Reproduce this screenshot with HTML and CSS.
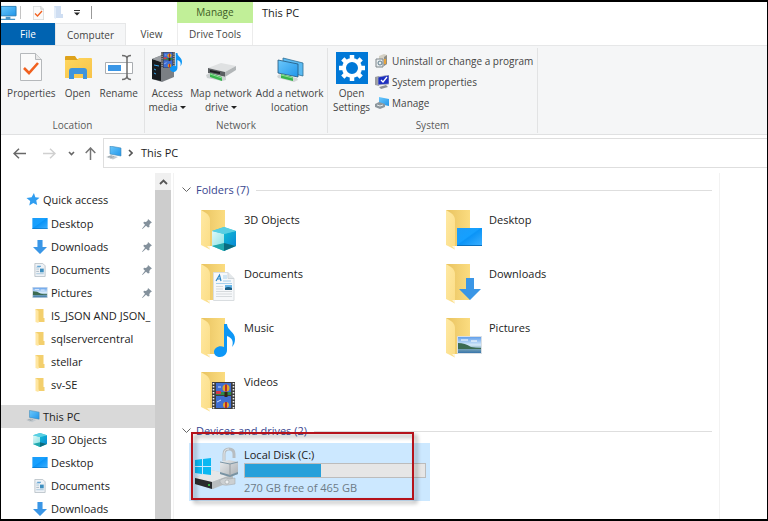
FILE: index.html
```html
<!DOCTYPE html>
<html lang="en">
<head>
<meta charset="utf-8">
<meta name="viewport" content="width=device-width, initial-scale=1">
<title>This PC</title>
<link rel="stylesheet" href="styles.css">
</head>
<body>
<svg class="defs" aria-hidden="true">
  <defs>
    <linearGradient id="g-fold" x1="0" y1="0" x2="1" y2="0"><stop offset="0" stop-color="#e8c25e"/><stop offset=".5" stop-color="#f2d071"/><stop offset="1" stop-color="#fbdc80"/></linearGradient>
    <linearGradient id="g-flap" x1="0" y1="0" x2="1" y2="1"><stop offset="0" stop-color="#ffe9a3"/><stop offset="1" stop-color="#fbdd86"/></linearGradient>
    <linearGradient id="g-blue" x1="0" y1="0" x2="1" y2="1"><stop offset="0" stop-color="#1c9cf8"/><stop offset=".45" stop-color="#15a0ff"/><stop offset=".5" stop-color="#0b94f7"/><stop offset="1" stop-color="#3db0ff"/></linearGradient>
    <linearGradient id="g-screen" x1="0" y1="0" x2="1" y2="1"><stop offset="0" stop-color="#6cc8fb"/><stop offset="1" stop-color="#2196ea"/></linearGradient>
    <linearGradient id="g-sky" x1="0" y1="0" x2="0" y2="1"><stop offset="0" stop-color="#5b9bea"/><stop offset=".5" stop-color="#d5e9fa"/><stop offset=".7" stop-color="#7fa8b8"/><stop offset="1" stop-color="#2f6ea8"/></linearGradient>
    <linearGradient id="g-metal" x1="0" y1="0" x2="1" y2="1"><stop offset="0" stop-color="#e9ecee"/><stop offset="1" stop-color="#a9adb0"/></linearGradient>
    <linearGradient id="g-cubeL" x1="0" y1="0" x2="1" y2="1"><stop offset="0" stop-color="#dff8f7"/><stop offset="1" stop-color="#8fe3e6"/></linearGradient>
    <linearGradient id="g-cubeR" x1="0" y1="0" x2="1" y2="1"><stop offset="0" stop-color="#12bcd3"/><stop offset="1" stop-color="#0989d6"/></linearGradient>
    <linearGradient id="g-open" x1="0" y1="0" x2="1" y2="1"><stop offset="0" stop-color="#ffd75e"/><stop offset="1" stop-color="#f7c34a"/></linearGradient>
  </defs>

  <symbol id="folder" viewBox="0 0 37 42">
    <path d="M0 0h24v36H9z" fill="url(#g-fold)"/>
    <path d="M0 0l5 3q4 3 4 7v29.500L0 35z" fill="url(#g-flap)"/>
    <path d="M6 36h3v3.500z" fill="#fff" opacity=".7"/>
  </symbol>
  <symbol id="cube" viewBox="0 0 24 24">
    <path d="M12 0l12 4v15l-12 5L0 19V4z" fill="#39c6d8"/>
    <path d="M0 4l12 3v10L0 19z" fill="url(#g-cubeL)"/>
    <path d="M24 4L12 7v10l12 2z" fill="url(#g-cubeR)"/>
    <path d="M12 0l12 4-12 3L0 4z" fill="#59cfe3"/>
    <path d="M12 16l12 3-12 5z" fill="#0b6b80"/><path d="M12 16L0 19l12 5z" fill="#23a9ae"/>
  </symbol>
  <symbol id="doc" viewBox="0 0 22 29">
    <path d="M.5.500H15l6 6v22H.500z" fill="#f6f8fa" stroke="#d9dde0"/>
    <path d="M15 .500v6h6" fill="#e3e7ea" stroke="#d0d5d9"/>
    <path d="M3 9l3.500-6L8 9M4.500 7H8" fill="none" stroke="#2b87c9" stroke-width="1.200"/>
    <path d="M10 4h4M10 6h4M10 9h8M3 11.500h16" stroke="#a7d0ec"/>
    <path d="M3 14.500h7M3 17h7M3 19.500h16M3 22h16M3 24.500h16" stroke="#d6dadd"/>
    <path d="M12 13h7v5h-7z" fill="#67b6e8"/><path d="M12 16q3-2 7 0v2h-7z" fill="#1d5f86"/>
  </symbol>
  <symbol id="doc-s" viewBox="0 0 12 15">
    <path d="M.5.500H9L11.500 3v11.500H.500z" fill="#eef2f6" stroke="#bcc4ca"/>
    <path d="M2 4.500h4M2 6.500h3M2 11.500h8" stroke="#a5c6dc"/><path d="M3 3h4v1H3z" fill="#3b8ecb"/>
    <path d="M6 6h4v4H6z" fill="#3f8fbf"/><path d="M2 9h3" stroke="#a9b7c2"/>
  </symbol>
  <symbol id="desk" viewBox="0 0 25 18"><path d="M0 0h25v18H0z" fill="url(#g-blue)"/><path d="M0 17h25v1H0z" fill="#0a70bf"/></symbol>
  <symbol id="down" viewBox="0 0 22 22"><path d="M7 0h8v11h7L11 22 0 11h7z" fill="#3a96e6"/></symbol>
  <symbol id="pic" viewBox="0 0 25 18">
    <path d="M.5.500h24v17H.500z" fill="url(#g-sky)" stroke="#d9dfe4"/>
    <path d="M1 7q7 0 13 4 5 1 10 1v1H1z" fill="#3c6b52"/>
    <path d="M4 4h7M14 5h6" stroke="#fff" stroke-width="1.500" opacity=".7"/>
  </symbol>
  <symbol id="note" viewBox="0 0 21 33">
    <path d="M10 0h3c0 6 8 8 8 15 0 3-1 6-3 8 2-6 0-9-5-11v14c0 4-3 7-7 7-3 0-6-2-6-5 0-4 5-7 10-5z" fill="#0d97f6"/>
  </symbol>
  <symbol id="film" viewBox="0 0 23 27">
    <path d="M0 0h23v27H0z" fill="#3d3d3d"/>
    <path d="M4 1h15v12H4zM4 14h15v12H4z" fill="#3f6ed2"/>
    <path d="M1.500 1v26M21.500 1v26" stroke="#f1f1f1" stroke-width="1.600" stroke-dasharray="1.500 1.500"/>
    <path d="M4 10h15v3H4z" fill="#2f8a47"/><path d="M4 9h5v3H4z" fill="#d63a48"/>
    <circle cx="14" cy="6" r="3.500" fill="#e0a626"/><path d="M13 2.500h2v7h-2z" fill="#b92b27"/>
    <path d="M14 10v5" stroke="#332415" stroke-width="3"/>
    <path d="M5 20l4-2M6 5h3" stroke="#c5d8ff"/><circle cx="14" cy="23" r="3" fill="#e0a626"/><path d="M13 20h2v6h-2z" fill="#b92b27"/>
  </symbol>
  <symbol id="pc" viewBox="0 0 16 14">
    <path d="M4 0l11 2v8L4 8z" fill="url(#g-screen)" stroke="#3f87b5" stroke-width=".6"/>
    <path d="M0 11l5-2 7 2-5 2.500z" fill="#c3cacf"/><path d="M2 11l4-1M4 12l4-1.500" stroke="#8b9499" stroke-width=".6"/>
  </symbol>
  <symbol id="star" viewBox="0 0 14 14"><path d="M8 0l1.500 4.500 4.500.500-3.500 3.200L11.500 13 7.300 10.700 3 13.500l1-5L0 5.500 5.500 4.700z" fill="#2f9df0"/></symbol>
  <symbol id="fold-s" viewBox="0 0 9 14"><path d="M0 0h8v9h1v4H3z" fill="#f3cf6d"/><path d="M0 0l3 2v12l-3-1z" fill="#ffe6a0"/></symbol>
  <symbol id="pin" viewBox="0 0 10 10"><path d="M6 0l4 3.500-1.200.500-1.500 2 .200 2L6 8.500 4 6.800.500 10 0 9.800 3 5.800 1.300 4l.7-1.300 2 .200 1.700-1.500z" fill="#84919c"/></symbol>
  <symbol id="sheet" viewBox="0 0 22 28">
    <path d="M.5.500h15l6 6v21H.500z" fill="#fafafa" stroke="#b5b8bb"/><path d="M15.500.500v6h6" fill="#e8e8e8" stroke="#b5b8bb"/>
    <path d="M4 15l5 5 9-10" fill="none" stroke="#f1611f" stroke-width="2.600"/>
  </symbol>
  <symbol id="chev" viewBox="0 0 9 6"><path d="M.5.500l4 4 4-4" fill="none" stroke="currentColor"/></symbol>
</svg>

<div class="window">
  <header>
    <div class="titlebar">
      <div class="quick">
        <svg class="mon" viewBox="0 0 17 16"><path d="M0 1h16v10H0z" fill="url(#g-screen)" stroke="#2a7fb8"/><path d="M5 12h5v2H5zM0 14h15v1.500H0z" fill="#4996c8"/></svg>
        <span class="bar"></span>
        <svg class="q-sheet"><use href="#sheet"/></svg>
        <svg class="q-fold" viewBox="0 0 9 13"><path d="M0 0h7v8h2v4H0z" fill="#cfdef2"/><path d="M0 0l2 2v11l-2-1z" fill="#e3edf9"/></svg>
        <svg class="q-more" viewBox="0 0 6 6"><path d="M0 .500h6" stroke="#333"/><path d="M0 2.500h6L3 5.500z" fill="#222"/></svg>
        <span class="bar dark"></span>
      </div>
      <div class="context">Manage</div>
      <h1>This PC</h1>
    </div>
    <nav class="tabs" aria-label="Ribbon tabs">
      <button class="file">File</button>
      <button class="current">Computer</button>
      <button class="view">View</button>
      <button class="tools">Drive Tools</button>
    </nav>
    <div class="ribbon">
      <section class="group location">
        <div class="actions">
          <button><svg class="i-sheet"><use href="#sheet"/></svg><span>Properties</span></button>
          <button><svg viewBox="0 0 28 28"><path d="M1 4q0-1 1-1h9l2 3h14v18H1z" fill="#dea21b"/><path d="M1 7h12l2-2h12q1 0 1 1v19H1z" fill="url(#g-open)"/><path d="M5 26V18q0-3 3-3h12q3 0 3 3v8h-4v-5h-9v5z" fill="#3f94dc"/></svg><span>Open</span></button>
          <button><svg viewBox="0 0 28 28"><path d="M.5 9.500h27v11H.500z" fill="#fff" stroke="#a9adb1"/><path d="M3 12h13v6H3z" fill="#3a96e6"/><path d="M17 2.500q5 0 5 3 0-3 4-3M22 5v18M17 26.500q5 0 5-4 0 4 4 4" fill="none" stroke="#6d6d6d" stroke-width="1.500"/></svg><span>Rename</span></button>
        </div>
        <h2>Location</h2>
      </section>
      <section class="group network">
        <div class="actions">
          <button><svg class="wide" viewBox="0 0 30 30"><path d="M0 7l10-4 12 3v19L10 30 0 27z" fill="#7b7f84"/><path d="M0 7l9 3v19l-9-2z" fill="#191c20"/><path d="M0 7l10-4 12 3-13 4z" fill="#9a9ea2"/><path d="M2 13l5 1M2 17l2 1M2 21l2 1" stroke="#37a6ef"/><use href="#film" x="9" y="0" width="14" height="16"/><use href="#note" x="18" y="1" width="12" height="19"/></svg><span>Access<br>media <i class="tri"></i></span></button>
          <button><svg class="wide" viewBox="0 0 30 30"><path d="M2 16l13-5 15 3-11 6z" fill="#dfe1e2"/><path d="M2 16l17 4v5L2 21z" fill="#5a5e61"/><path d="M4 18l10 2v2L4 20z" fill="#1c1f21"/><path d="M19 20l11-6v4l-11 7z" fill="#b2b6b8"/><path d="M0 23l4-2 16 4v3l-4 1-15-3z" fill="#cdd2d3"/><path d="M4 21l12 4v4L4 25z" fill="#38b44c"/><path d="M4 22l12 4" stroke="#8bdc96"/></svg><span>Map network<br>drive <i class="tri"></i></span></button>
          <button><svg class="wide" viewBox="0 0 30 30"><path d="M8 6l20 5v13L8 19z" fill="#5abaf2" stroke="#2d6f96" stroke-width=".8"/><path d="M3 8l20 4v13L3 21z" fill="url(#g-screen)" stroke="#23577a" stroke-width=".8"/><path d="M2 24l3-2 17 4 1 2-4 2-16-4z" fill="#d2d6d7"/><path d="M6 22l12 3v4L6 26z" fill="#38b44c"/><path d="M6 23l12 3" stroke="#8bdc96"/></svg><span>Add a network<br>location</span></button>
        </div>
        <h2>Network</h2>
      </section>
      <section class="group system">
        <div class="actions">
          <button><svg class="gear" viewBox="0 0 32 32"><path d="M0 0h32v32H0z" fill="#0078d7"/><circle cx="16" cy="16" r="8" fill="none" stroke="#fff" stroke-width="4"/><g stroke="#fff" stroke-width="4.500"><path d="M16 3v4M16 25v4M3 16h4M25 16h4M6.800 6.800l3 3M22.200 22.200l3 3M25.200 6.800l-3 3M9.800 22.200l-3 3"/></g></svg><span>Open<br>Settings</span></button>
          <div class="list">
            <button><svg viewBox="0 0 14 14"><path d="M4 2l5-2 3 1v9l-3 2-5-2z" fill="#d4d0c4"/><path d="M9 3l3-2v9l-3 2z" fill="#8f8d84"/><path d="M1 5h7v8H1z" fill="#e8ecee" stroke="#7c8589"/><circle cx="5" cy="9" r="2" fill="none" stroke="#5f7c8b"/><path d="M9 5h2v5H9z" fill="#e8a33c"/></svg>Uninstall or change a program</button>
            <button><svg viewBox="0 0 14 14"><path d="M0 2l4-1v10l-4-1z" fill="#9a9c9f"/><path d="M3 2l11-2v9L3 10z" fill="#1d2fc0" stroke="#b5b8bb" stroke-width=".7"/><path d="M6 5l2 2 4-5" fill="none" stroke="#fff" stroke-width="1.300"/><path d="M4 12l7-2 2 2-7 2z" fill="#8c9093"/></svg>System properties</button>
            <button><svg viewBox="0 0 14 14"><path d="M4 1l10 2v7L4 8z" fill="url(#g-screen)"/><path d="M0 8l4-2 6 2v3l-5 2-5-2z" fill="#8d979d"/><path d="M2 9l3 1 3-1" stroke="#e4e9eb" fill="none"/></svg>Manage</button>
          </div>
        </div>
        <h2>System</h2>
      </section>
    </div>
  </header>

  <div class="navrow">
    <div class="arrows">
      <button aria-label="Back"><svg class="arr" viewBox="0 0 13 11"><path d="M13 5.500H1M6 .700L1 5.500l5 4.800" fill="none" stroke="#686868" stroke-width="1.500"/></svg></button>
      <button aria-label="Forward"><svg class="arr" viewBox="0 0 13 11"><path d="M0 5.500h12M7 .700l5 4.800-5 4.800" fill="none" stroke="#d0d0d0" stroke-width="1.500"/></svg></button>
      <button aria-label="Recent locations"><svg class="rec" viewBox="0 0 7 5"><path d="M1 1l2.500 2.500L6 1" fill="none" stroke="#666" stroke-width="1.600"/></svg></button>
      <button aria-label="Up"><svg class="up" viewBox="0 0 11 13"><path d="M5.500 13V1M.700 6l4.800-5 4.800 5" fill="none" stroke="#757575" stroke-width="1.500"/></svg></button>
    </div>
    <div class="address">
      <svg class="a-pc"><use href="#pc"/></svg>
      <svg class="a-chev" viewBox="0 0 5 8"><path d="M1 1l3 3-3 3" fill="none" stroke="#555" stroke-width="1.600"/></svg>
      <button>This PC</button>
    </div>
  </div>

  <div class="body">
    <nav class="tree" aria-label="Folders">
      <a class="root" href="#"><svg class="ti star"><use href="#star"/></svg>Quick access</a>
      <ul>
        <li><a href="#"><svg class="ti flat"><use href="#desk"/></svg><span>Desktop</span><svg class="pin"><use href="#pin"/></svg></a></li>
        <li><a href="#"><svg class="ti"><use href="#down"/></svg><span>Downloads</span><svg class="pin"><use href="#pin"/></svg></a></li>
        <li><a href="#"><svg class="ti"><use href="#doc-s"/></svg><span>Documents</span><svg class="pin"><use href="#pin"/></svg></a></li>
        <li><a href="#"><svg class="ti flat"><use href="#pic"/></svg><span>Pictures</span><svg class="pin"><use href="#pin"/></svg></a></li>
        <li><a href="#"><svg class="ti"><use href="#fold-s"/></svg><span>IS_JSON AND JSON_</span></a></li>
        <li><a href="#"><svg class="ti"><use href="#fold-s"/></svg><span>sqlservercentral</span></a></li>
        <li><a href="#"><svg class="ti"><use href="#fold-s"/></svg><span>stellar</span></a></li>
        <li><a href="#"><svg class="ti"><use href="#fold-s"/></svg><span>sv-SE</span></a></li>
      </ul>
      <a class="root selected" href="#"><svg class="ti star"><use href="#pc"/></svg>This PC</a>
      <ul>
        <li><a href="#"><svg class="ti"><use href="#cube"/></svg><span>3D Objects</span></a></li>
        <li><a href="#"><svg class="ti flat"><use href="#desk"/></svg><span>Desktop</span></a></li>
        <li><a href="#"><svg class="ti"><use href="#doc-s"/></svg><span>Documents</span></a></li>
        <li><a href="#"><svg class="ti"><use href="#down"/></svg><span>Downloads</span></a></li>
      </ul>
    </nav>
    <div class="scroll"><button aria-label="Scroll up"><svg viewBox="0 0 9 6"><path d="M1 5l3.500-3.500L8 5" fill="none" stroke="#555" stroke-width="1.800"/></svg></button></div>
    <main>
      <h2 class="head"><svg><use href="#chev"/></svg>Folders (7)</h2>
      <div class="tiles">
        <a href="#"><svg viewBox="0 0 37 42"><use href="#folder" width="37" height="42"/><use href="#cube" x="11" y="17" width="24" height="24"/></svg>3D Objects</a>
        <a href="#"><svg viewBox="0 0 37 42"><use href="#folder" width="37" height="42"/><use href="#desk" x="11" y="18" width="25" height="18"/></svg>Desktop</a>
        <a href="#"><svg viewBox="0 0 37 42"><use href="#folder" width="37" height="42"/><use href="#doc" x="12" y="8" width="22" height="29"/></svg>Documents</a>
        <a href="#"><svg viewBox="0 0 37 42"><use href="#folder" width="37" height="42"/><use href="#down" x="13" y="14" width="22" height="22"/></svg>Downloads</a>
        <a href="#"><svg viewBox="0 0 37 42"><use href="#folder" width="37" height="42"/><use href="#note" x="13" y="6" width="21" height="33"/></svg>Music</a>
        <a href="#"><svg viewBox="0 0 37 42"><use href="#folder" width="37" height="42"/><use href="#pic" x="11" y="18" width="25" height="18"/></svg>Pictures</a>
        <a href="#"><svg viewBox="0 0 37 42"><use href="#folder" width="37" height="42"/><use href="#film" x="11" y="10" width="23" height="27"/></svg>Videos</a>
      </div>
      <h2 class="head"><svg><use href="#chev"/></svg>Devices and drives (2)</h2>
      <div class="drive">
        <svg viewBox="0 0 44 44">
          <path d="M0 31l16-8 22 5v6L18 42 0 37z" fill="#c3c7c9"/><path d="M0 31l16-8 22 5-21 7z" fill="#e5e7e8"/>
          <path d="M0 31l17 4v7L0 37z" fill="#292c2e"/><path d="M17 35l21-8v6l-21 9z" fill="#b9bdbf"/><circle cx="14" cy="38" r="1" fill="#3be04a"/>
          <path d="M0 13l7-1v7H0zM8 12l8-1v8H8zM0 20h7v7l-7-1zM8 20h8v8l-8-1z" fill="#0bb8f2"/>
          <path d="M29 14V7q0-5 5-5t5 5v4" fill="none" stroke="#b7bdc1" stroke-width="3"/><path d="M29 14V7q0-5 5-5" fill="none" stroke="#e4e8ea"/>
          <path d="M25 15l9-2 9 2v12l-8 3-10-3z" fill="url(#g-metal)"/><path d="M25 15l10 2 8-2" fill="none" stroke="#7d96a5"/><path d="M25 25l10 3 8-3v2l-8 3-10-3z" fill="#7893a3"/><path d="M35 17v12" stroke="#959b9f"/>
          <path d="M31 31q-7 1-6 4 2 4 8 3l7-1v-6l-6 1z" fill="#ccd0d2" stroke="#a6abae" stroke-width=".6"/><circle cx="32" cy="35" r="2" fill="#eef0f1" stroke="#9fa4a7" stroke-width=".6"/>
        </svg>
        <div class="info">
          <span>Local Disk (C:)</span>
          <div class="meter"><div class="used" style="width:42%"></div></div>
          <span class="free">270 GB free of 465 GB</span>
        </div>
        <div class="mark"></div>
      </div>
    </main>
    <aside></aside>
  </div>
</div>
</body>
</html>
```

FILE: styles.css
```css
* { box-sizing: border-box; }

body {
  margin: 0;
  font-family: "Open Sans", "Noto Sans", sans-serif;
  font-size: 11px;
  line-height: 16px;
  color: #222;
  background: #fff;
}

h1, h2, ul { margin: 0; padding: 0; font: inherit; list-style: none; }
button { margin: 0; padding: 0; border: 0; background: none; font: inherit; color: inherit; }
a { color: inherit; text-decoration: none; }
svg { display: block; flex: none; }
.defs { position: absolute; width: 0; height: 0; }

.window {
  display: flex;
  flex-direction: column;
  height: 100vh;
  border: 1px solid #000;
  border-top-width: 2px;
  border-bottom-width: 2px;
}

/* Title bar */
.titlebar { display: flex; height: 21px; }
.quick { display: flex; align-items: center; width: 176px; }
.mon { width: 16px; height: 16px; }
.bar { width: 1px; height: 13px; margin-left: 3px; background: #c4c4c4; }
.q-sheet { width: 11px; height: 14px; margin-left: 12px; }
.q-fold { width: 9px; height: 13px; margin-left: 10px; }
.q-more { width: 6px; height: 6px; margin-left: 11px; }
.bar.dark { margin-left: 11px; background: #999; }
.context {
  width: 76px;
  line-height: 20px;
  font-size: 10px;
  text-align: center;
  color: #3d5c25;
  background: #c1ef98;
}
h1 { padding-left: 9px; line-height: 22px; }

/* Tabs */
.tabs { display: flex; height: 22px; font-size: 10px; color: #444; }
.file { width: 54px; color: #fff; background: #0063b1; }
.current { width: 71px; background: #f5f6f7; border: 1px solid #e6e7e8; border-bottom: 0; }
.view { width: 51px; }
.tools { width: 76px; border: 1px solid #ececec; border-width: 0 1px; }

/* Ribbon */
.ribbon {
  display: flex;
  padding: 2px 0 1px;
  font-size: 10px;
  line-height: 14px;
  color: #444;
  background: #f5f6f7;
  border-top: 1px solid #e6e7e8;
  border-bottom: 1px solid #e0e1e2;
}
.group { display: flex; flex-direction: column; height: 85px; border-right: 1px solid #e2e3e4; }
.location { width: 144px; }
.network { width: 183px; }
.system { width: 210px; }
.actions { display: flex; justify-content: center; height: 70px; }
.actions button { display: flex; flex-direction: column; align-items: center; white-space: nowrap; }
.actions svg { width: 28px; height: 28px; margin: 5px 0; }
.location .actions { gap: 8px; }
.network .actions { gap: 4px; }
.actions .i-sheet { width: 22px; }
.actions .wide { width: 30px; height: 30px; margin: 4px 0; }
.actions .gear { width: 32px; height: 32px; margin: 4px 0 2px; }
.tri { display: inline-block; border: 3px solid transparent; border-top-color: #222; border-bottom: 0; vertical-align: 2px; }
.ribbon h2 { text-align: center; color: #5a5a5a; }
.system .actions { justify-content: flex-start; gap: 5px; padding-left: 5px; }
.list { display: flex; flex-direction: column; gap: 7px; padding-top: 6px; }
.actions .list button { flex-direction: row; gap: 3px; }
.actions .list svg { width: 14px; height: 14px; margin: 0; }

/* Address row */
.navrow { display: flex; margin-top: 3px; }
.arrows { display: flex; align-items: center; width: 102px; padding-left: 12px; }
.arr { width: 13px; height: 11px; margin-right: 17px; }
.rec { width: 7px; height: 5px; margin-left: -5px; }
.up { width: 11px; height: 13px; margin-left: 10px; }
.address {
  display: flex;
  flex: 1;
  align-items: center;
  height: 30px;
  padding-left: 2px;
  border: 1px solid #dedede;
  border-right: 0;
}
.a-pc { width: 16px; height: 14px; }
.a-chev { width: 5px; height: 8px; margin: 0 8px 0 6px; }

/* Body */
.body { display: flex; flex: 1; min-height: 0; padding-top: 5px; }
.tree { width: 154px; padding-top: 15px; overflow: hidden; }
.tree a { display: flex; align-items: center; height: 23px; white-space: nowrap; }
.tree .root { padding-left: 25px; }
.tree .root:first-child { margin-bottom: 1px; }
.tree li a { padding: 0 3px 0 31px; gap: 3px; }
.tree li span { flex: 1; }
.tree .selected { margin-top: 9px; background: #d9d9d9; }
.ti { width: 16px; height: 14px; }
.flat { height: 11px; }
.star { width: 14px; height: 13px; margin-right: 3px; }
.pin { width: 10px; height: 10px; }

.scroll { width: 16px; background: #cdcdcd; }
.scroll button { display: grid; place-items: center; width: 16px; height: 17px; background: #f0f0f0; }
.scroll svg { width: 9px; height: 6px; }

main { flex: 1; margin-left: 2px; padding: 9px 7px 0 8px; border: 1px solid #f2f2f2; border-width: 0 1px; }
aside { width: 47px; }
.head { display: flex; align-items: center; height: 16px; color: #38468f; }
.head svg { width: 9px; height: 6px; margin-right: 5px; color: #666; }
.head::after { content: ""; flex: 1; height: 1px; margin-left: 7px; background: #dedede; }

.tiles { display: grid; grid-template-columns: repeat(auto-fill, 245px); gap: 12px 0; padding: 12px 0 9px 19px; }
.tiles a { display: flex; gap: 6px; line-height: 20px; }
.tiles svg { width: 37px; height: 42px; }

.drive { position: relative; display: flex; gap: 5px; width: 241px; margin: 4px 0 0 7px; padding: 3px 4px 3px 6px; background: #cce8ff; }
.drive > svg { width: 44px; height: 44px; margin-top: 1px; }
.info { flex: 1; }
.info span { display: block; line-height: 17px; }
.meter { height: 15px; border: 1px solid #bcbcbc; background: #e6e6e6; }
.used { height: 100%; background: #26a0da; }
.info .free { line-height: 20px; color: #6d7b86; }
.mark { position: absolute; left: 2px; top: -11px; width: 223px; height: 68px; border: 2px solid #b5121b; filter: drop-shadow(3px 3px 2px rgba(0, 0, 0, .4)); }
```
